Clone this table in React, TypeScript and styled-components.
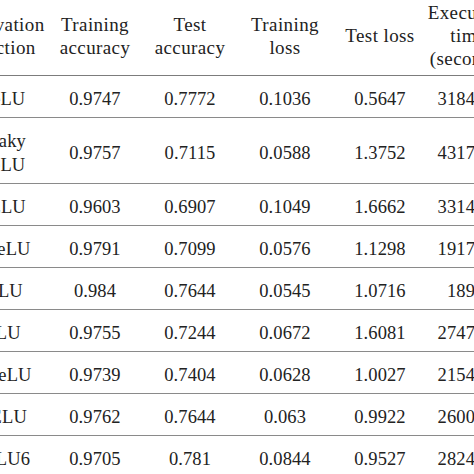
import React from "react";
import styled, { createGlobalStyle } from "styled-components";

const Global = createGlobalStyle`
  html, body {
    margin: 0;
    padding: 0;
    background: #ffffff;
    overflow: hidden;
    width: 474px;
    height: 474px;
  }
  #root {
    width: 474px;
    height: 474px;
    overflow: hidden;
  }
`;

const Table = styled.div`
  display: grid;
  grid-template-columns: 90px repeat(4, 95px) 81px;
  width: max-content;
  margin-left: -42.5px;
  font-family: "Liberation Serif", "Times New Roman", serif;
  color: #222222;
`;

const HeadCell = styled.div`
  display: flex;
  align-items: center;
  justify-content: center;
  text-align: center;
  height: 76px;
  padding-bottom: 4px;
  box-sizing: border-box;
  font-size: 19px;
  letter-spacing: 0.4px;
  line-height: 23px;
  border-bottom: 1px solid #7c7c7c;
  white-space: nowrap;
`;

const Cell = styled.div`
  display: flex;
  align-items: center;
  justify-content: center;
  text-align: center;
  padding: 11px 0 6px;
  font-size: 18.5px;
  letter-spacing: 0.1px;
  line-height: 24px;
  border-bottom: 1px solid #8a8a8a;
  white-space: nowrap;
`;

type Row = {
  name: React.ReactNode;
  trainAcc: string;
  testAcc: string;
  trainLoss: string;
  testLoss: string;
  time: string;
};

const rows: Row[] = [
  { name: "ReLU", trainAcc: "0.9747", testAcc: "0.7772", trainLoss: "0.1036", testLoss: "0.5647", time: "3184.23" },
  {
    name: (
      <>
        Leaky
        <br />
        ReLU
      </>
    ),
    trainAcc: "0.9757",
    testAcc: "0.7115",
    trainLoss: "0.0588",
    testLoss: "1.3752",
    time: "4317.62",
  },
  { name: "SELU", trainAcc: "0.9603", testAcc: "0.6907", trainLoss: "0.1049", testLoss: "1.6662", time: "3314.08" },
  { name: "PReLU", trainAcc: "0.9791", testAcc: "0.7099", trainLoss: "0.0576", testLoss: "1.1298", time: "1917.45" },
  { name: "SiLU", trainAcc: "0.984", testAcc: "0.7644", trainLoss: "0.0545", testLoss: "1.0716", time: "189.3" },
  { name: "ELU", trainAcc: "0.9755", testAcc: "0.7244", trainLoss: "0.0672", testLoss: "1.6081", time: "2747.91" },
  { name: "RReLU", trainAcc: "0.9739", testAcc: "0.7404", trainLoss: "0.0628", testLoss: "1.0027", time: "2154.37" },
  { name: "CELU", trainAcc: "0.9762", testAcc: "0.7644", trainLoss: "0.063", testLoss: "0.9922", time: "2600.15" },
  { name: "ReLU6", trainAcc: "0.9705", testAcc: "0.781", trainLoss: "0.0844", testLoss: "0.9527", time: "2824.70" },
];

export default function App() {
  return (
    <>
      <Global />
      <Table>
        <HeadCell>
          Activation
          <br />
          function
        </HeadCell>
        <HeadCell>
          Training
          <br />
          accuracy
        </HeadCell>
        <HeadCell>
          Test
          <br />
          accuracy
        </HeadCell>
        <HeadCell>
          Training
          <br />
          loss
        </HeadCell>
        <HeadCell>Test loss</HeadCell>
        <HeadCell>
          Execution
          <br />
          time
          <br />
          (seconds)
        </HeadCell>
        {rows.map((r, i) => (
          <React.Fragment key={i}>
            <Cell>{r.name}</Cell>
            <Cell>{r.trainAcc}</Cell>
            <Cell>{r.testAcc}</Cell>
            <Cell>{r.trainLoss}</Cell>
            <Cell>{r.testLoss}</Cell>
            <Cell>{r.time}</Cell>
          </React.Fragment>
        ))}
      </Table>
    </>
  );
}
